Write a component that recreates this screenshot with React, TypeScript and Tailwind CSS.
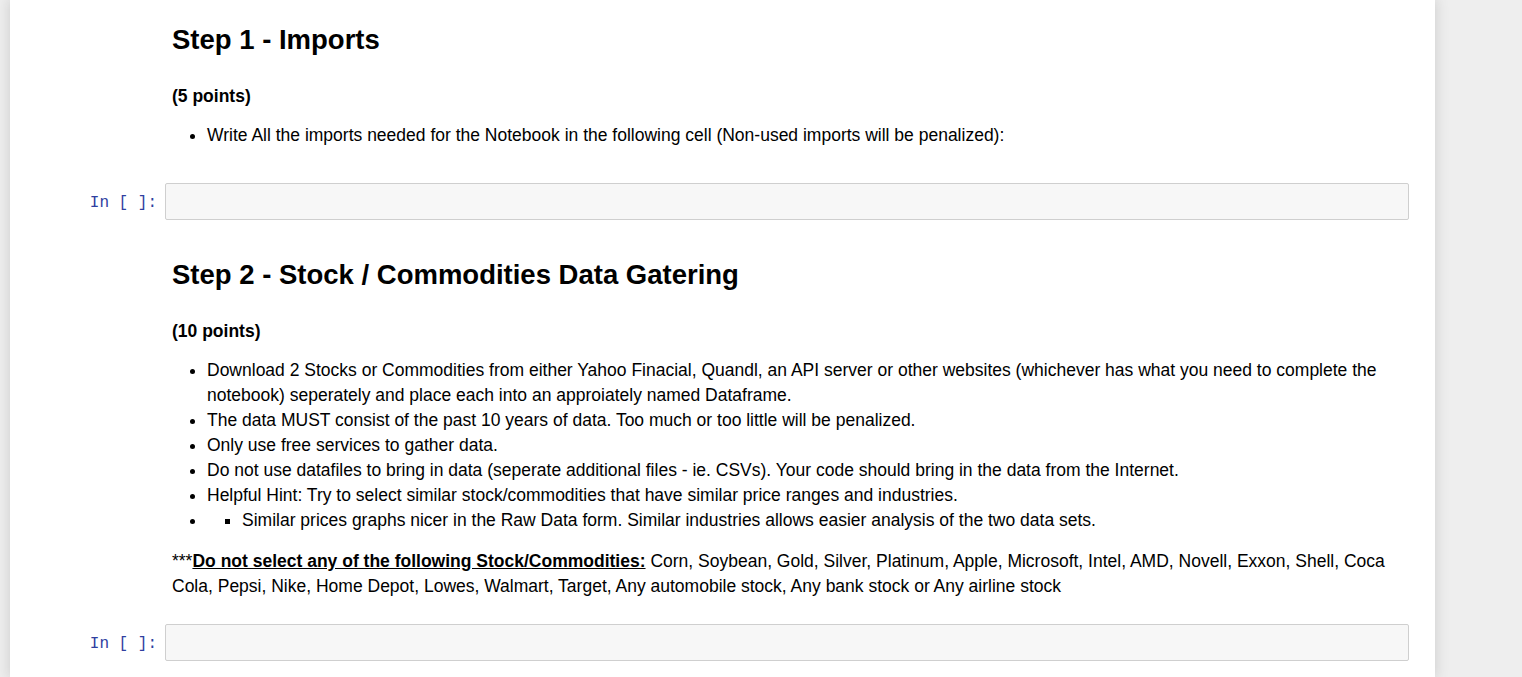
import React from 'react';

function Prompt({ label }: { label?: string }) {
  return (
    <div className="h-[37px] w-[155px] shrink-0 pr-[8px] text-right font-['Liberation_Mono',monospace] text-[16px] leading-[41px] text-[#303F9F]">
      {label}
    </div>
  );
}

function CodeCell({ className }: { className?: string }) {
  return (
    <div className={`flex items-start ${className ?? ''}`}>
      <Prompt label="In [ ]:" />
      <div className="h-[37px] flex-1 rounded-[2px] border border-[#cfcfcf] bg-[#f7f7f7]" />
    </div>
  );
}

function TextCell({ children, className }: { children: React.ReactNode; className?: string }) {
  return (
    <div className={`flex ${className ?? ''}`}>
      <div className="w-[155px] shrink-0" />
      <div className="flex-1 px-[7px]">{children}</div>
    </div>
  );
}

export default function App() {
  return (
    <div className="min-h-screen overflow-hidden bg-[#eeeeee] font-['Liberation_Sans',Arial,sans-serif] text-black">
      <div className="ml-[10px] w-[1425px] min-h-[677px] bg-white pr-[26px] shadow-[0px_0px_12px_1px_rgba(87,87,87,0.2)]">
        <TextCell>
          <h2 className="mt-[23px] text-[27.5px] font-bold leading-[33px]">Step 1 - Imports</h2>
          <p className="mt-[28px] text-[17.5px] font-bold leading-[25px]">(5 points)</p>
          <ul className="mt-[14px] list-disc pl-[35px] text-[17.5px] leading-[25px]">
            <li>Write All the imports needed for the Notebook in the following cell (Non-used imports will be penalized):</li>
          </ul>
        </TextCell>

        <CodeCell className="mt-[35px]" />

        <TextCell>
          <h2 className="mt-[38px] text-[27.5px] font-bold leading-[33px]">Step 2 - Stock / Commodities Data Gatering</h2>
          <p className="mt-[28px] text-[17.5px] font-bold leading-[25px]">(10 points)</p>
          <ul className="mt-[14px] list-disc pl-[35px] text-[17.5px] leading-[25px]">
            <li>
              Download 2 Stocks or Commodities from either Yahoo Finacial, Quandl, an API server or other websites (whichever has what you need to complete the notebook) seperately and place each into an approiately named Dataframe.
            </li>
            <li>The data MUST consist of the past 10 years of data. Too much or too little will be penalized.</li>
            <li>Only use free services to gather data.</li>
            <li>Do not use datafiles to bring in data (seperate additional files - ie. CSVs). Your code should bring in the data from the Internet.</li>
            <li>Helpful Hint: Try to select similar stock/commodities that have similar price ranges and industries.</li>
            <li>
              <ul className="list-[square] pl-[35px]">
                <li>Similar prices graphs nicer in the Raw Data form. Similar industries allows easier analysis of the two data sets.</li>
              </ul>
            </li>
          </ul>
          <p className="mt-[16px] text-[17.5px] leading-[25px]">
            ***<span className="font-bold underline">Do not select any of the following Stock/Commodities:</span> Corn, Soybean, Gold, Silver, Platinum, Apple, Microsoft, Intel, AMD, Novell, Exxon, Shell, Coca Cola, Pepsi, Nike, Home Depot, Lowes, Walmart, Target, Any automobile stock, Any bank stock or Any airline stock
          </p>
        </TextCell>

        <CodeCell className="mt-[25px]" />
      </div>
    </div>
  );
}
